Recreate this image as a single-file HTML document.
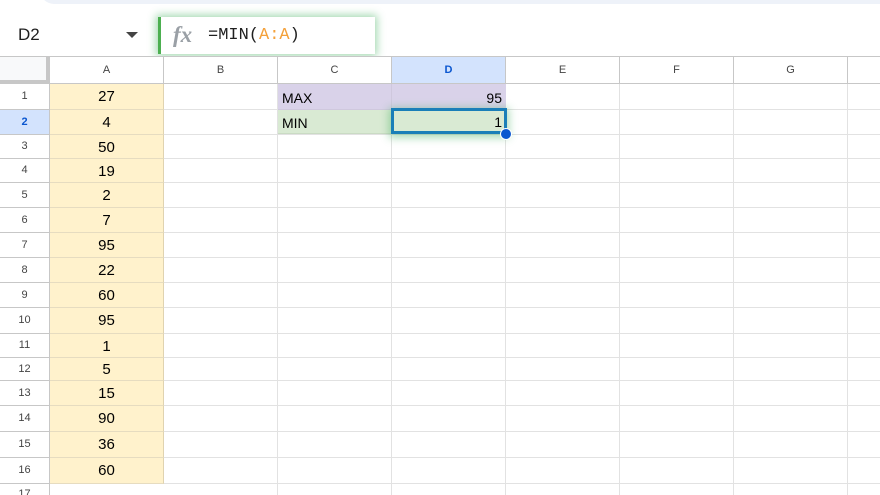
<!DOCTYPE html><html><head><style>
html,body{margin:0;width:880px;height:495px;overflow:hidden}
body{background:#fff;font-family:"Liberation Sans",Arial,sans-serif;position:relative}
div{position:absolute;box-sizing:border-box}
.top{left:40px;top:-10px;width:860px;height:14px;background:#eef2f9;border-radius:0 0 0 14px}
.nb{left:18px;top:25px;font-size:17px;color:#1f1f1f}
.arr{left:126px;top:32px;width:0;height:0;border-left:6px solid transparent;border-right:6px solid transparent;border-top:6px solid #444}
.fb{left:158px;top:17px;width:217px;height:37px;background:#fff;box-shadow:0 0 8px 2px rgba(52,168,83,.45);border-left:3px solid #4caf50}
.fx{left:173px;top:22px;font-family:"Liberation Serif",serif;font-style:italic;font-weight:bold;font-size:23px;color:#9aa0a6}
.fm{left:208px;top:26px;font-family:"Liberation Mono",monospace;font-size:17px;color:#1f1f1f}
.hl{left:0;top:56px;width:880px;height:1px;background:#c7c7c7}
.ch{top:57px;height:27px;border-right:1px solid #c7c7c7;border-bottom:1px solid #c7c7c7;font-size:11px;color:#444;text-align:center;line-height:27px;background:#fff}
.rh{left:0;width:50px;border-right:1px solid #c7c7c7;border-bottom:1px solid #c7c7c7;font-size:11px;color:#444;text-align:center;background:#fff}
.gv{top:84px;width:1px;height:411px;background:#e2e2e2}
.gh{left:50px;width:830px;height:1px;background:#e2e2e2}
.a{left:50px;width:114px;background:#fff2cc;border-right:1px solid #e0d3b0;border-bottom:1px solid #e6dcc0;text-align:center;font-size:15px;color:#000}
</style></head><body>
<div class="top"></div>
<div class="nb">D2</div><div class="arr"></div>
<div class="fb"></div>
<div class="fx">fx</div>
<div class="fm">=MIN(<span style="color:#f4a13a">A:A</span>)</div>
<div class="hl"></div>
<div class="ch" style="left:0;width:50px;background:#f8f9fa;border-right:4px solid #c7c7c7;border-bottom:4px solid #c7c7c7"></div>
<div class="ch" style="left:50px;width:114px">A</div>
<div class="ch" style="left:164px;width:114px">B</div>
<div class="ch" style="left:278px;width:114px">C</div>
<div class="ch" style="left:392px;width:114px;background:#d3e3fd;color:#0b57d0;font-weight:bold">D</div>
<div class="ch" style="left:506px;width:114px">E</div>
<div class="ch" style="left:620px;width:114px">F</div>
<div class="ch" style="left:734px;width:114px">G</div>
<div class="ch" style="left:848px;width:40px"></div>
<div class="gv" style="left:277px"></div><div class="gv" style="left:391px"></div><div class="gv" style="left:505px"></div><div class="gv" style="left:619px"></div><div class="gv" style="left:733px"></div><div class="gv" style="left:847px"></div>
<div class="gh" style="top:109px"></div><div class="gh" style="top:134px"></div><div class="gh" style="top:158px"></div><div class="gh" style="top:182px"></div><div class="gh" style="top:207px"></div><div class="gh" style="top:232px"></div><div class="gh" style="top:257px"></div><div class="gh" style="top:282px"></div><div class="gh" style="top:307px"></div><div class="gh" style="top:333px"></div><div class="gh" style="top:357px"></div><div class="gh" style="top:380px"></div><div class="gh" style="top:405px"></div><div class="gh" style="top:431px"></div><div class="gh" style="top:457px"></div><div class="gh" style="top:483px"></div>
<div class="rh" style="top:84px;height:26px;line-height:25px">1</div>
<div class="rh" style="top:110px;height:25px;line-height:24px;background:#d3e3fd;color:#0b57d0;font-weight:bold">2</div>
<div class="rh" style="top:135px;height:24px;line-height:23px">3</div>
<div class="rh" style="top:159px;height:24px;line-height:23px">4</div>
<div class="rh" style="top:183px;height:25px;line-height:24px">5</div>
<div class="rh" style="top:208px;height:25px;line-height:24px">6</div>
<div class="rh" style="top:233px;height:25px;line-height:24px">7</div>
<div class="rh" style="top:258px;height:25px;line-height:24px">8</div>
<div class="rh" style="top:283px;height:25px;line-height:24px">9</div>
<div class="rh" style="top:308px;height:26px;line-height:25px">10</div>
<div class="rh" style="top:334px;height:24px;line-height:23px">11</div>
<div class="rh" style="top:358px;height:23px;line-height:22px">12</div>
<div class="rh" style="top:381px;height:25px;line-height:24px">13</div>
<div class="rh" style="top:406px;height:26px;line-height:25px">14</div>
<div class="rh" style="top:432px;height:26px;line-height:25px">15</div>
<div class="rh" style="top:458px;height:26px;line-height:25px">16</div>
<div class="rh" style="top:484px;height:11px;line-height:20px;border-bottom:none;overflow:hidden">17</div>
<div class="a" style="top:84px;height:26px;line-height:26px">27</div>
<div class="a" style="top:110px;height:25px;line-height:25px">4</div>
<div class="a" style="top:135px;height:24px;line-height:25px">50</div>
<div class="a" style="top:159px;height:24px;line-height:25px">19</div>
<div class="a" style="top:183px;height:25px;line-height:25px">2</div>
<div class="a" style="top:208px;height:25px;line-height:25px">7</div>
<div class="a" style="top:233px;height:25px;line-height:25px">95</div>
<div class="a" style="top:258px;height:25px;line-height:25px">22</div>
<div class="a" style="top:283px;height:25px;line-height:25px">60</div>
<div class="a" style="top:308px;height:26px;line-height:26px">95</div>
<div class="a" style="top:334px;height:24px;line-height:26px">1</div>
<div class="a" style="top:358px;height:23px;line-height:23px">5</div>
<div class="a" style="top:381px;height:25px;line-height:25px">15</div>
<div class="a" style="top:406px;height:26px;line-height:26px">90</div>
<div class="a" style="top:432px;height:26px;line-height:26px">36</div>
<div class="a" style="top:458px;height:26px;line-height:26px">60</div>
<div style="left:278px;top:84px;width:228px;height:26px;background:#d9d2e9;border-bottom:1px solid #cfc8dd"></div>
<div style="left:391px;top:84px;width:1px;height:26px;background:#cfc8dd"></div>
<div style="left:282px;top:90px;font-size:14px;color:#000">MAX</div>
<div style="left:470px;top:90px;width:32px;text-align:right;font-size:14px;color:#000">95</div>
<div style="left:278px;top:110px;width:228px;height:24px;background:#d9ead3;border-bottom:1px solid #cadbc4"></div>
<div style="left:282px;top:115px;font-size:14px;color:#000">MIN</div>
<div style="left:391px;top:108px;width:116px;height:26px;border:3px solid #1a7fb8;box-shadow:0 2px 8px 2px rgba(52,168,83,.4);background:#d9ead3"></div>
<div style="left:470px;top:114px;width:32px;text-align:right;font-size:14px;color:#000">1</div>
<div style="left:500px;top:128px;width:12px;height:12px;border-radius:50%;background:#0b57d0;border:1px solid #fff"></div>
</body></html>
